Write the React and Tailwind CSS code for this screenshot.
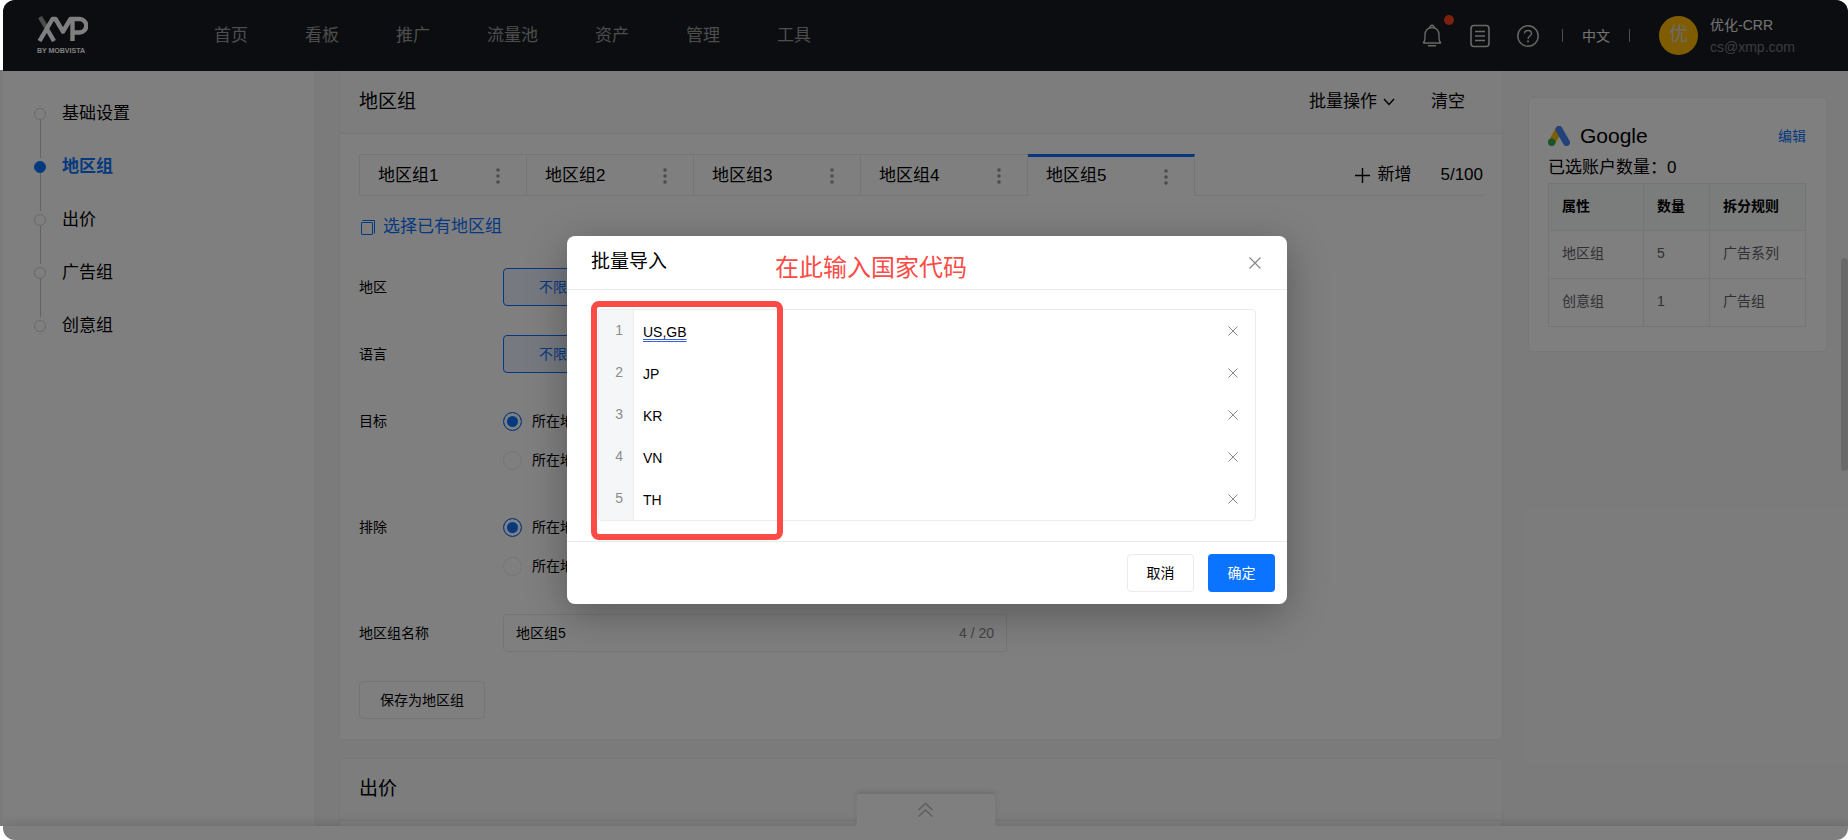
import { useState } from 'react';
import clsx from 'clsx';

const navItems = ['首页', '看板', '推广', '流量池', '资产', '管理', '工具'];

const steps = ['基础设置', '地区组', '出价', '广告组', '创意组'];

const tabs = ['地区组1', '地区组2', '地区组3', '地区组4', '地区组5'];

const summaryRows = [
  { name: '地区组', count: 5, rule: '广告系列' },
  { name: '创意组', count: 1, rule: '广告组' },
];

const initialCodes = ['US,GB', 'JP', 'KR', 'VN', 'TH'];

function Logo() {
  return (
    <div className="w-[60px] flex flex-col items-start gap-1 text-white">
      <svg width="51" height="26" viewBox="0 0 51 26" fill="none" stroke="currentColor" strokeWidth="4.4">
        <path d="M3 1 L9 11" opacity="0.55" />
        <path d="M10 13 L17 25" />
        <path d="M2.5 25 L15.5 3 H18.5 L26 15.5 L33.5 3 H42.5 A6.2 6.2 0 0 1 42.5 16.5 H36" strokeLinejoin="round" />
        <path d="M35.5 5 V25" />
      </svg>
      <span className="text-[7px] leading-[10px] font-bold whitespace-nowrap">BY MOBVISTA</span>
    </div>
  );
}

function BellIcon() {
  return (
    <svg width="20" height="24" viewBox="0 0 20 24" fill="none" stroke="currentColor" strokeWidth="1.4">
      <path d="M1 19 H19 M1 19 C3 17 3 16 3 11 C3 6.5 6 3.5 10 3.5 C14 3.5 17 6.5 17 11 C17 16 17 17 19 19" />
      <path d="M8 3.5 C8 0.5 12 0.5 12 3.5 M6 21.8 H14" />
    </svg>
  );
}

function DocIcon() {
  return (
    <svg width="20" height="24" viewBox="0 0 20 24" fill="none" stroke="currentColor" strokeWidth="1.6">
      <rect x="1" y="1.5" width="18" height="21" rx="3" />
      <path d="M5 7.5 H15 M5 12 H15 M5 16.5 H15" />
    </svg>
  );
}

function HelpIcon() {
  return (
    <svg width="22" height="22" viewBox="0 0 22 22" fill="none" stroke="currentColor" strokeWidth="1.4">
      <circle cx="11" cy="11" r="10.2" />
      <path d="M7.5 8.5 C7.5 4.5 14.5 4.5 14.5 8.5 C14.5 11 11 11 11 14" />
      <path d="M11 15.6 V17.2" strokeWidth="1.8" />
    </svg>
  );
}

function GoogleAdsIcon() {
  return (
    <svg width="22" height="20" viewBox="0 0 22 20" fill="none" strokeLinecap="round">
      <path d="M11 3.5 L4 16" stroke="#fbbc04" strokeWidth="7" />
      <path d="M11 3.5 L18.5 16.5" stroke="#4285f4" strokeWidth="7" />
      <circle cx="3.7" cy="16.2" r="3.7" fill="#34a853" />
    </svg>
  );
}

function CloseIcon({ size }) {
  return (
    <svg width={size} height={size} viewBox="0 0 12 12" fill="none" stroke="currentColor" strokeWidth="1.2">
      <path d="M0.5 0.5 L11.5 11.5 M11.5 0.5 L0.5 11.5" />
    </svg>
  );
}

function Header() {
  return (
    <header className="h-[71px] flex-shrink-0 flex items-center bg-[#181a20] pl-[34px] pr-[53px] text-[#d0d0d0]">
      <Logo />
      <nav className="flex gap-[57px] ml-[117px] text-[17px] text-[#9a9a9c]">
        {navItems.map((item) => (
          <a key={item} href="#">{item}</a>
        ))}
      </nav>
      <div className="ml-auto flex items-center">
        <button className="relative" aria-label="通知">
          <BellIcon />
          <span className="absolute -top-[9px] left-[22px] w-[10px] h-[10px] rounded-full bg-[#f8421c]" />
        </button>
        <button className="ml-[28px]" aria-label="文档"><DocIcon /></button>
        <button className="ml-[27px]" aria-label="帮助"><HelpIcon /></button>
        <span className="w-px h-[13px] bg-[#9a9a9c] ml-[23px]" />
        <button className="mx-[19px] text-sm text-[#e8e8e8]">中文</button>
        <span className="w-px h-[13px] bg-[#9a9a9c]" />
        <div className="ml-[29px] w-[39px] h-[39px] rounded-full bg-[#ffb900] flex items-center justify-center text-[19px] text-[#d8d8d8]">
          优
        </div>
        <div className="ml-3 text-sm leading-[22px]">
          <p className="text-[#e8e8e8]">优化-CRR</p>
          <p className="text-[#77787c]">cs@xmp.com</p>
        </div>
      </div>
    </header>
  );
}

function Steps() {
  return (
    <aside className="w-[311px] flex-shrink-0 bg-white pt-[37px] pl-[31px]">
      <ol>
        {steps.map((step, i) => {
          const active = i === 1;
          return (
            <li key={step} className="h-[53px] flex gap-4">
              <div className="w-3 flex flex-col items-center">
                <span
                  className={clsx(
                    'w-3 h-3 flex-shrink-0 rounded-full border',
                    active ? 'bg-[#0a73ff] border-[#0a73ff]' : 'border-[#d0d0d0]'
                  )}
                />
                {i < steps.length - 1 && <span className="w-px h-[38px] bg-[#c8c8c8]" />}
              </div>
              <a
                href="#"
                className={clsx('text-[17px] leading-[12px]', active ? 'font-bold text-[#0a73ff]' : 'text-black')}
              >
                {step}
              </a>
            </li>
          );
        })}
      </ol>
    </aside>
  );
}

function TabBar() {
  return (
    <div className="h-[42px] flex">
      <div className="flex border-l border-[#ebebeb]">
        {tabs.map((tab, i) => {
          const active = i === tabs.length - 1;
          return (
            <div
              key={tab}
              className={clsx(
                'w-[167px] flex items-center justify-between pl-[18px] pr-[26px] border-r border-[#ebebeb]',
                active ? 'border-t-3 border-t-[#0a73ff]' : 'border-t border-b pt-[2px]'
              )}
            >
              <button className="text-[17px]">{tab}</button>
              <button aria-label={`${tab} 更多`}>
                <svg width="4" height="18" viewBox="0 0 4 18" fill="#999">
                  <circle cx="2" cy="3" r="1.8" />
                  <circle cx="2" cy="9" r="1.8" />
                  <circle cx="2" cy="15" r="1.8" />
                </svg>
              </button>
            </div>
          );
        })}
      </div>
      <div className="flex-1 flex items-center justify-end pt-[2px] border-b border-[#ebebeb] text-[17px]">
        <button className="flex items-center gap-[7px]">
          <svg width="15" height="15" viewBox="0 0 15 15" stroke="#000" strokeWidth="1.4">
            <path d="M7.5 0 V15 M0 7.5 H15" />
          </svg>
          新增
        </button>
        <span className="ml-[29px]">5/100</span>
      </div>
    </div>
  );
}

function UnlimitedRow({ label }) {
  return (
    <div className="flex items-center">
      <span className="w-[144px]">{label}</span>
      <button className="h-[38px] px-[35px] rounded border border-[#0a73ff] bg-[#ecf3ff] text-[#0a73ff]">
        不限
      </button>
    </div>
  );
}

function RadioRow({ label, name, options }) {
  return (
    <fieldset className="flex">
      <legend className="float-left w-[144px] h-[38px] leading-[38px]">{label}</legend>
      <div className="flex flex-col gap-px">
        {options.map((option, i) => (
          <label key={option} className="h-[38px] flex items-center gap-[10px]">
            <input
              type="radio"
              name={name}
              defaultChecked={i === 0}
              className="appearance-none w-[19px] h-[19px] rounded-full border border-[#ebebeb] checked:border-[#0a73ff] checked:bg-[#0a73ff] checked:shadow-[inset_0_0_0_3px_#fff]"
            />
            {option}
          </label>
        ))}
      </div>
    </fieldset>
  );
}

function RegionCard() {
  return (
    <section className="flex-shrink-0 bg-white border border-t-0 border-[#f0f0f0] rounded-b">
      <div className="h-[63px] flex items-center px-[19px] bg-[#fafafa] border-b border-[#ededed]">
        <h2 className="text-[19px]">地区组</h2>
        <button className="ml-auto flex items-center gap-[6px] text-[17px]">
          批量操作
          <svg width="12" height="8" viewBox="0 0 12 8" fill="none" stroke="#000" strokeWidth="1.4">
            <path d="M1 1 L6 6.5 L11 1" />
          </svg>
        </button>
        <button className="ml-[36px] mr-[18px] text-[17px]">清空</button>
      </div>
      <div className="px-[19px] py-5 text-sm">
        <TabBar />
        <a href="#" className="mt-[19px] h-6 w-fit flex items-center gap-2 text-[17px] text-[#0a73ff]">
          <svg className="ml-[2px]" width="14" height="16" viewBox="0 0 14 16" fill="none" stroke="currentColor">
            <rect x="0.5" y="3.5" width="11" height="12" rx="0.5" />
            <path d="M1.5 1.5 H13.5 V14.5" />
          </svg>
          选择已有地区组
        </a>
        <div className="mt-[29px] flex flex-col gap-[29px]">
          <UnlimitedRow label="地区" />
          <UnlimitedRow label="语言" />
          <RadioRow label="目标" name="target" options={['所在地或兴趣', '所在地']} />
          <RadioRow label="排除" name="exclude" options={['所在地或兴趣', '所在地']} />
          <div className="flex items-center">
            <label htmlFor="group-name" className="w-[144px]">地区组名称</label>
            <div className="w-[504px] h-[38px] flex items-center px-3 border border-[#ebebeb] rounded">
              <input id="group-name" defaultValue="地区组5" className="flex-1 outline-none" />
              <span className="text-[#888]">4 / 20</span>
            </div>
          </div>
          <button className="h-[38px] w-fit px-5 border border-[#ebebeb] rounded">保存为地区组</button>
        </div>
      </div>
    </section>
  );
}

function SummaryCard() {
  return (
    <aside className="w-[299px] h-fit flex-shrink-0 mt-[26px] ml-[25px] mr-[21px] pl-[19px] pr-5 pt-[25px] pb-6 bg-white border border-[#f0f0f0] rounded">
      <div className="h-[26px] flex items-center">
        <GoogleAdsIcon />
        <h3 className="ml-[10px] text-[21px]">Google</h3>
        <a href="#" className="ml-auto text-sm text-[#0a73ff]">编辑</a>
      </div>
      <p className="h-[34px] leading-[38px] text-[17px]">已选账户数量：0</p>
      <table className="w-full text-sm text-left border border-[#ebebeb]">
        <thead>
          <tr className="h-[47px] bg-[#f7fafa]">
            <th className="w-[95px] px-[13px] pb-[2px] border border-[#ebebeb]">属性</th>
            <th className="w-[66px] px-[13px] pb-[2px] border border-[#ebebeb]">数量</th>
            <th className="px-[13px] pb-[2px] border border-[#ebebeb]">拆分规则</th>
          </tr>
        </thead>
        <tbody className="text-[#606266]">
          {summaryRows.map((row) => (
            <tr key={row.name} className="h-[48px]">
              <td className="px-[13px] pb-[3px] border border-[#ebebeb]">{row.name}</td>
              <td className="px-[13px] pb-[3px] border border-[#ebebeb]">{row.count}</td>
              <td className="px-[13px] pb-[3px] border border-[#ebebeb]">{row.rule}</td>
            </tr>
          ))}
        </tbody>
      </table>
    </aside>
  );
}

function ImportDialog() {
  const [codes, setCodes] = useState(initialCodes);

  const updateCode = (index, value) => setCodes(codes.map((c, i) => (i === index ? value : c)));
  const removeCode = (index) => setCodes(codes.filter((_, i) => i !== index));

  return (
    <div role="dialog" aria-label="批量导入" className="relative w-[720px] bg-white rounded-lg shadow-[0_10px_40px_rgba(0,0,0,0.3)]">
      <div className="h-[54px] flex items-center justify-between pl-6 pr-[26px] border-b border-[#ebebeb]">
        <h2 className="text-[19px]">批量导入</h2>
        <button className="text-[#888]" aria-label="关闭"><CloseIcon size={12} /></button>
      </div>

      <div className="pt-[19px] pb-5 pl-[31px] pr-[31px]">
        <div className="border border-[#ebebeb] rounded overflow-hidden">
          {codes.map((code, i) => (
            <div key={i} className="h-[42px] flex items-center text-sm">
              <span className="w-[35px] h-full leading-[40px] pr-[10px] text-right text-[#8c8c8c] bg-[#f5f6f8] border-r border-[#ebebeb]">
                {i + 1}
              </span>
              <input
                aria-label={`国家代码 ${i + 1}`}
                value={code}
                spellCheck={false}
                onChange={(e) => updateCode(i, e.target.value)}
                className={clsx(
                  'flex-1 ml-[9px] pt-px outline-none',
                  i === 0 &&
                    'underline decoration-double decoration-1 underline-offset-2 decoration-[#3a5fe5] [text-decoration-skip-ink:none]'
                )}
              />
              <button className="mr-[17px] text-[#888]" aria-label="删除" onClick={() => removeCode(i)}>
                <CloseIcon size={10} />
              </button>
            </div>
          ))}
        </div>
      </div>

      <div className="flex justify-end gap-[14px] p-3 border-t border-[#ebebeb] text-sm">
        <button className="h-[38px] w-[67px] rounded border border-[#ebebeb]">取消</button>
        <button className="h-[38px] w-[67px] rounded bg-[#0a73ff] text-white">确定</button>
      </div>

      {/* Callout drawn on top of the code list */}
      <p className="absolute top-4 left-[208px] text-2xl text-[#fa4b46]">在此输入国家代码</p>
      <div className="absolute top-[65px] left-6 w-[192px] h-[239px] border-6 border-[#fa4b46] rounded-lg pointer-events-none" />
    </div>
  );
}

export default function App() {
  return (
    <div className="h-screen flex bg-white text-black font-['Liberation_Sans','Noto_Sans_CJK_SC',sans-serif]">
      {/* Window edge */}
      <div className="w-[3px] flex-shrink-0 pt-[70px] pb-[14px]">
        <div className="h-full bg-[#7a7a7a]" />
      </div>

      <div className="relative flex-1 flex flex-col overflow-hidden rounded-[12px]">
        <Header />
        <div className="relative flex-1 min-h-0 flex overflow-hidden bg-[#f7f7f7]">
          <Steps />
          <main className="flex-1 min-w-0 ml-[25px] flex flex-col gap-[18px]">
            <RegionCard />
            <section className="flex-shrink-0 bg-white border border-[#f0f0f0] rounded">
              <div className="h-[62px] flex items-center px-[19px] bg-[#fafafa] border-b border-[#ededed]">
                <h2 className="text-[19px]">出价</h2>
              </div>
              <div className="h-[200px]" />
            </section>
          </main>
          <SummaryCard />
          <div className="absolute right-0 top-[187px] w-[7px] h-[213px] rounded-full bg-[#d2d2d2]" />
        </div>

        <footer className="relative h-[14px] flex-shrink-0 bg-white shadow-[0_-2px_12px_rgba(0,0,0,0.16)]">
          <button
            aria-label="展开"
            className="absolute bottom-full left-1/2 -translate-x-1/2 w-[139px] h-8 flex items-center justify-center bg-white rounded-t shadow-[0_-3px_4px_rgba(0,0,0,0.1)]"
          >
            <svg width="16" height="16" viewBox="0 0 16 16" fill="none" stroke="#bbb" strokeWidth="1.5">
              <path d="M1 8 L8 1.5 L15 8 M1 14.5 L8 8 L15 14.5" />
            </svg>
          </button>
        </footer>

        <div className="absolute inset-0 z-50 flex items-center justify-center pl-[3px] bg-black/50">
          <ImportDialog />
        </div>
      </div>
    </div>
  );
}
